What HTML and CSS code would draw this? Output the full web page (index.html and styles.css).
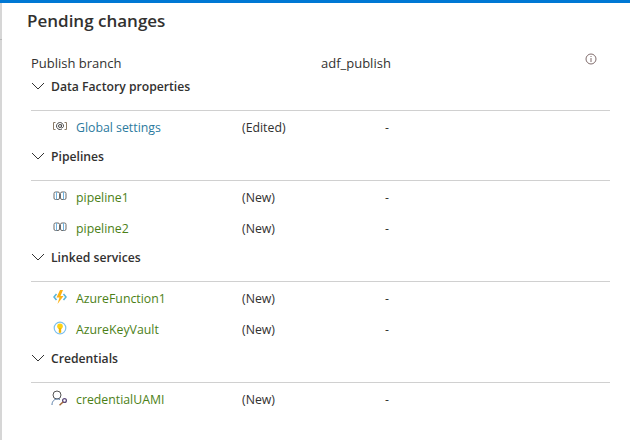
FILE: index.html
```html
<!DOCTYPE html>
<html>

<head>
  <title>Pending changes</title>
  <link rel="stylesheet" href="styles.css">
</head>

<body>
  <div class="side-rail"><div class="rail-top"></div></div>
  <div id="panel">
    <h1>Pending changes</h1>
    <div class="branch-row">
      <span class="branch-label">Publish branch</span>
      <span class="branch-name">adf_publish</span>
      <svg class="info-icon" width="12" height="12" viewBox="0 0 12 12" fill="none" stroke="#806c6c">
        <circle cx="6" cy="6" r="5"/>
        <path d="M6 5v4M6 3v1"/>
      </svg>
    </div>

    <div class="group">
      <div class="group-header">
        <svg class="chevron" width="14" height="8" viewBox="0 0 14 8" fill="none" stroke="#333"><path d="M1 1l6 6 6-6"/></svg>
        <span>Data Factory properties</span>
      </div>
      <div class="item">
        <svg class="item-icon" width="14" height="12" viewBox="0 0 14 12" fill="none">
          <path d="M2.500 2.500H.5v7h2M11.500 2.500h2v7h-2" stroke="#8a7a66"/>
          <path d="M10.500 6.500V6a3.500 3.500 0 1 0-1.500 2.900" stroke="#4a4a4a"/>
          <circle cx="7" cy="6" r="1.500" stroke="#4a4a4a"/>
          <path d="M8.500 4.500V7c0 .8 2 .8 2-.5" stroke="#4a4a4a"/>
        </svg>
        <span class="item-name edited">Global settings</span>
        <span class="item-status">(Edited)</span>
        <span class="item-dash">-</span>
      </div>
    </div>

    <div class="group">
      <div class="group-header">
        <svg class="chevron" width="14" height="8" viewBox="0 0 14 8" fill="none" stroke="#333"><path d="M1 1l6 6 6-6"/></svg>
        <span>Pipelines</span>
      </div>
      <div class="item">
        <svg class="item-icon" width="14" height="12" viewBox="0 0 14 12" fill="none">
          <rect x="1" y="2" width="5.500" height="7.500" rx="1.500" stroke="#6b6b6b"/>
          <rect x="7.500" y="2" width="5.500" height="7.500" rx="1.500" stroke="#6b6b6b"/>
          <path d="M3.500 2v7.500M10.500 2v7.500" stroke="#6fb3e0"/>
        </svg>
        <span class="item-name">pipeline1</span>
        <span class="item-status">(New)</span>
        <span class="item-dash">-</span>
      </div>
      <div class="item">
        <svg class="item-icon" width="14" height="12" viewBox="0 0 14 12" fill="none">
          <rect x="1" y="2" width="5.500" height="7.500" rx="1.500" stroke="#6b6b6b"/>
          <rect x="7.500" y="2" width="5.500" height="7.500" rx="1.500" stroke="#6b6b6b"/>
          <path d="M3.500 2v7.500M10.500 2v7.500" stroke="#6fb3e0"/>
        </svg>
        <span class="item-name">pipeline2</span>
        <span class="item-status">(New)</span>
        <span class="item-dash">-</span>
      </div>
    </div>

    <div class="group">
      <div class="group-header">
        <svg class="chevron" width="14" height="8" viewBox="0 0 14 8" fill="none" stroke="#333"><path d="M1 1l6 6 6-6"/></svg>
        <span>Linked services</span>
      </div>
      <div class="item">
        <svg class="item-icon" width="14" height="14" viewBox="0 0 14 14" fill="none">
          <path d="M3.500 4L1 7l2.500 3M10.500 4L13 7l-2.500 3" stroke="#59b4d9" stroke-width="1.500"/>
          <path d="M7 0L3.500 7.500h3L4.500 14l6-8H7.500L10 0z" fill="#fcb214"/>
        </svg>
        <span class="item-name">AzureFunction1</span>
        <span class="item-status">(New)</span>
        <span class="item-dash">-</span>
      </div>
      <div class="item">
        <svg class="item-icon" width="14" height="14" viewBox="0 0 14 14" fill="none">
          <circle cx="7" cy="7" r="5.800" stroke="#7cc0ee" stroke-width="1.200"/>
          <circle cx="7" cy="5.200" r="2.800" fill="#fcd116"/>
          <path d="M5.800 7h2.400v4.800H5.800z" fill="#f0b400"/>
        </svg>
        <span class="item-name">AzureKeyVault</span>
        <span class="item-status">(New)</span>
        <span class="item-dash">-</span>
      </div>
    </div>

    <div class="group">
      <div class="group-header">
        <svg class="chevron" width="14" height="8" viewBox="0 0 14 8" fill="none" stroke="#333"><path d="M1 1l6 6 6-6"/></svg>
        <span>Credentials</span>
      </div>
      <div class="item">
        <svg class="item-icon cred-icon" width="17" height="16" viewBox="0 0 17 16" fill="none">
          <circle cx="6" cy="5" r="4" stroke="#555"/>
          <path d="M1 15c0-3.500 2-6 5.500-6 1 0 1.800.2 2.500.5" stroke="#5a7ea8"/>
          <circle cx="13.500" cy="10.500" r="1.900" stroke="#5c4a7a" stroke-width="1.300"/>
          <path d="M12 12l-3.500 3.300" stroke="#a0683a" stroke-width="1.500"/>
        </svg>
        <span class="item-name">credentialUAMI</span>
        <span class="item-status">(New)</span>
        <span class="item-dash">-</span>
      </div>
    </div>
  </div>
</body>

</html>
```

FILE: styles.css
```css
body {
  margin: 0;
  width: 630px;
  height: 440px;
  overflow: hidden;
  display: flex;
  background-color: #fff;
  border-top: 3px solid #0078d4;
  box-sizing: border-box;
  font-family: "Open Sans", "Noto Sans", sans-serif;
  font-size: 12.300px;
  color: #323130;
}

.side-rail {
  width: 2px;
  background-color: #d6d6d6;
}

.rail-top {
  height: 36px;
  border-bottom: 1px solid #b8b8b8;
}

#panel {
  width: 579px;
  padding-left: 29px;
}

h1 {
  margin: 0 0 0 -4px;
  height: 36px;
  line-height: 36px;
  font-size: 17px;
  font-weight: 600;
}

.branch-row {
  display: flex;
  align-items: center;
  height: 22px;
  margin-top: 13px;
  font-size: 13px;
}

.branch-label {
  width: 290px;
}

.branch-name {
  flex-grow: 1;
}

.info-icon {
  margin: -9px 13px 0 0;
}

.group + .group {
  margin-top: 1px;
}

.group-header {
  display: flex;
  align-items: center;
  height: 24px;
  margin-bottom: 1px;
  padding-bottom: 12px;
  border-bottom: 1px solid #d0d0d0;
  font-size: 12.200px;
  font-weight: 600;
}

.chevron {
  margin: 0 6px 0 0;
}

.item {
  display: flex;
  align-items: center;
  height: 31px;
}

.item-icon {
  margin-left: 22px;
  width: 14px;
  margin-top: -3px;
}

.cred-icon {
  width: 17px;
  margin-left: 20px;
  margin-right: -1px;
}

.item-name {
  width: 166px;
  margin-left: 9px;
  color: #4c7f17;
}

.item-name.edited {
  color: #2c7a9e;
}

.item-status {
  width: 143px;
}
```
